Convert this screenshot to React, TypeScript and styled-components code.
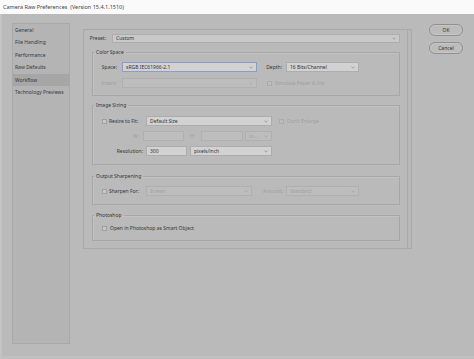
import React from "react";
import styled, { createGlobalStyle, css } from "styled-components";

const GlobalStyle = createGlobalStyle`
  html, body { margin: 0; padding: 0; }
  body {
    width: 474px;
    height: 359px;
    overflow: hidden;
    background: #bababa;
    font-family: "Noto Sans", "Open Sans", Arial, sans-serif;
  }
  * { box-sizing: border-box; }
`;

const Window = styled.div`
  width: 474px;
  height: 359px;
  display: flex;
  flex-direction: column;
`;

const TitleBar = styled.div`
  height: 14px;
  flex: none;
  background: #fafafa;
  color: #444444;
  font-size: 5.5px;
  line-height: 14px;
  padding-left: 3px;
  white-space: pre;
`;

const Body = styled.div`
  flex: 1;
  display: flex;
  align-items: flex-start;
  background: #bababa;
  border-left: 2px solid #c4c4c4;
  border-bottom: 3px solid #c0c0c0;
  padding: 9px 0 0 10px;
`;

const Sidebar = styled.div`
  width: 58px;
  height: 321px;
  flex: none;
  background: #b4b4b4;
  border: 1px solid #a9a9a9;
  display: flex;
  flex-direction: column;
`;

const NavItem = styled.div<{ $active?: boolean }>`
  height: 12.4px;
  line-height: 12.4px;
  padding-left: 2px;
  font-size: 5px;
  color: #383838;
  white-space: nowrap;
  ${(p) =>
    p.$active &&
    css`
      background: #a6a6a6;
    `}
`;

const Frame = styled.div`
  margin: 6px 0 0 13px;
  width: 329px;
  height: 220px;
  flex: none;
  border: 1px solid #a9a9a9;
  display: flex;
`;

const Content = styled.div`
  flex: 1;
  display: flex;
  flex-direction: column;
  padding: 3px 0 5px 0;
`;

const ScrollTrack = styled.div`
  width: 4px;
  flex: none;
  border-left: 1px solid #aaaaaa;
  background: #b8b8b8;
`;

const Row = styled.div<{ $mt?: number }>`
  display: flex;
  align-items: center;
  height: 10px;
  margin-top: ${(p) => p.$mt ?? 0}px;
`;

const Label = styled.div<{ $w?: number; $ml?: number; $mr?: number; $disabled?: boolean; $left?: boolean }>`
  width: ${(p) => (p.$w ? `${p.$w}px` : "auto")};
  margin-left: ${(p) => p.$ml ?? 0}px;
  margin-right: ${(p) => p.$mr ?? 0}px;
  flex: none;
  text-align: ${(p) => (p.$left ? "left" : "right")};
  font-size: 5px;
  white-space: nowrap;
  color: ${(p) => (p.$disabled ? "#a0a0a0" : "#363636")};
`;

const SelectBox = styled.div<{ $w: number; $h?: number; $ml?: number; $focus?: boolean; $disabled?: boolean; $light?: boolean }>`
  width: ${(p) => p.$w}px;
  height: ${(p) => p.$h ?? 10}px;
  margin-left: ${(p) => p.$ml ?? 0}px;
  flex: none;
  display: flex;
  align-items: center;
  justify-content: space-between;
  padding: 0 3px 0 3px;
  font-size: 5px;
  white-space: nowrap;
  overflow: hidden;
  background: ${(p) => (p.$disabled ? "#bdbdbd" : p.$light ? "#d2d2d2" : "#c9c9c9")};
  border: 1px solid ${(p) => (p.$focus ? "#8d9bcb" : p.$disabled ? "#b0b0b0" : "#adadad")};
  color: ${(p) => (p.$disabled ? "#a2a2a2" : "#333333")};
`;

const Chevron = styled.svg`
  width: 4px;
  height: 3px;
  flex: none;
`;

const Select: React.FC<{
  w: number;
  h?: number;
  ml?: number;
  value?: string;
  focus?: boolean;
  disabled?: boolean;
  light?: boolean;
  noChevron?: boolean;
}> = ({ w, h, ml, value, focus, disabled, light, noChevron }) => (
  <SelectBox $w={w} $h={h} $ml={ml} $focus={focus} $disabled={disabled} $light={light}>
    <span>{value ?? ""}</span>
    {!noChevron && (
      <Chevron viewBox="0 0 4 3">
        <polyline points="0.5,0.6 2,2.2 3.5,0.6" fill="none" stroke={disabled ? "#a4a4a4" : "#8a8a8a"} strokeWidth="0.7" />
      </Chevron>
    )}
  </SelectBox>
);

const Check = styled.div<{ $ml?: number; $disabled?: boolean }>`
  width: 5px;
  height: 5px;
  flex: none;
  margin-left: ${(p) => p.$ml ?? 0}px;
  border: 1px solid ${(p) => (p.$disabled ? "#ababab" : "#a0a0a0")};
  background: ${(p) => (p.$disabled ? "#bcbcbc" : "#c8c8c8")};
`;

const Group = styled.fieldset<{ $mt: number; $pt: number; $pb: number }>`
  margin: ${(p) => p.$mt}px 7px 0 8px;
  padding: ${(p) => p.$pt}px 0 ${(p) => p.$pb}px 0;
  border: 1px solid #a7a7a7;
  box-shadow: inset 1px 1px 0 #c2c2c2;
  min-inline-size: 0;
`;

const Legend = styled.legend`
  font-size: 5px;
  line-height: 6px;
  height: 6px;
  padding: 0 2px;
  margin-left: 1px;
  color: #333333;
  white-space: nowrap;
`;

const Buttons = styled.div`
  margin: 1px 0 0 17px;
  width: 34px;
  flex: none;
  display: flex;
  flex-direction: column;
  gap: 6px;
`;

const Button = styled.div`
  height: 12px;
  border-radius: 6px;
  border: 1px solid #909090;
  box-shadow: inset 0 0 0 1px #c6c6c6;
  background: #bcbcbc;
  font-size: 5px;
  color: #333333;
  display: flex;
  align-items: center;
  justify-content: center;
`;

const navItems = ["General", "File Handling", "Performance", "Raw Defaults", "Workflow", "Technology Previews"];

export default function App() {
  return (
    <>
      <GlobalStyle />
      <Window>
        <TitleBar>{"Camera Raw Preferences  (Version 15.4.1.1510)"}</TitleBar>
        <Body>
          <Sidebar>
            {navItems.map((n) => (
              <NavItem key={n} $active={n === "Workflow"}>
                {n}
              </NavItem>
            ))}
          </Sidebar>
          <Frame>
            <Content>
              <Row $mt={0}>
                <Label $w={22} $mr={6}>Preset:</Label>
                <Select w={288} h={9} value="Custom" />
              </Row>

              <Group $mt={6} $pt={7} $pb={7}>
                <Legend>Color Space</Legend>
                <Row>
                  <Label $w={24} $mr={5}>Space:</Label>
                  <Select w={135} value="sRGB IEC61966-2.1" focus light />
                  <Label $w={16} $ml={9} $mr={4}>Depth:</Label>
                  <Select w={73} value="16 Bits/Channel" light />
                </Row>
                <Row $mt={6}>
                  <Label $w={24} $mr={5} $disabled>Intent:</Label>
                  <Select w={135} disabled />
                  <Check $ml={10} $disabled />
                  <Label $ml={3} $left $disabled>Simulate Paper &amp; Ink</Label>
                </Row>
              </Group>

              <Group $mt={6} $pt={8} $pb={8}>
                <Legend>Image Sizing</Legend>
                <Row>
                  <Check $ml={9} />
                  <Label $w={32} $ml={2} $left>Resize to Fit:</Label>
                  <Select w={126} ml={5} value="Default Size" light />
                  <Check $ml={7} $disabled />
                  <Label $ml={3} $left $disabled>Don't Enlarge</Label>
                </Row>
                <Row $mt={5}>
                  <Label $w={46} $mr={4} $disabled>W:</Label>
                  <Select w={41} disabled noChevron />
                  <Label $w={6} $ml={5} $mr={6} $disabled>H:</Label>
                  <Select w={42} disabled noChevron />
                  <Select w={27} ml={2} value="in..." disabled />
                </Row>
                <Row $mt={5}>
                  <Label $w={50} $mr={3}>Resolution:</Label>
                  <Select w={41} value="300" light noChevron />
                  <Select w={82} ml={3} value="pixels/inch" light />
                </Row>
              </Group>

              <Group $mt={8} $pt={7} $pb={8}>
                <Legend>Output Sharpening</Legend>
                <Row>
                  <Check $ml={9} />
                  <Label $w={32} $ml={2} $left>Sharpen For:</Label>
                  <Select w={106} ml={5} value="Screen" disabled />
                  <Label $w={19} $ml={11} $mr={4} $disabled>Amount:</Label>
                  <Select w={73} value="Standard" disabled />
                </Row>
              </Group>

              <Group $mt={7} $pt={5} $pb={7}>
                <Legend>Photoshop</Legend>
                <Row>
                  <Check $ml={9} />
                  <Label $ml={3} $left>Open in Photoshop as Smart Object</Label>
                </Row>
              </Group>
            </Content>
            <ScrollTrack />
          </Frame>
          <Buttons>
            <Button>OK</Button>
            <Button>Cancel</Button>
          </Buttons>
        </Body>
      </Window>
    </>
  );
}
